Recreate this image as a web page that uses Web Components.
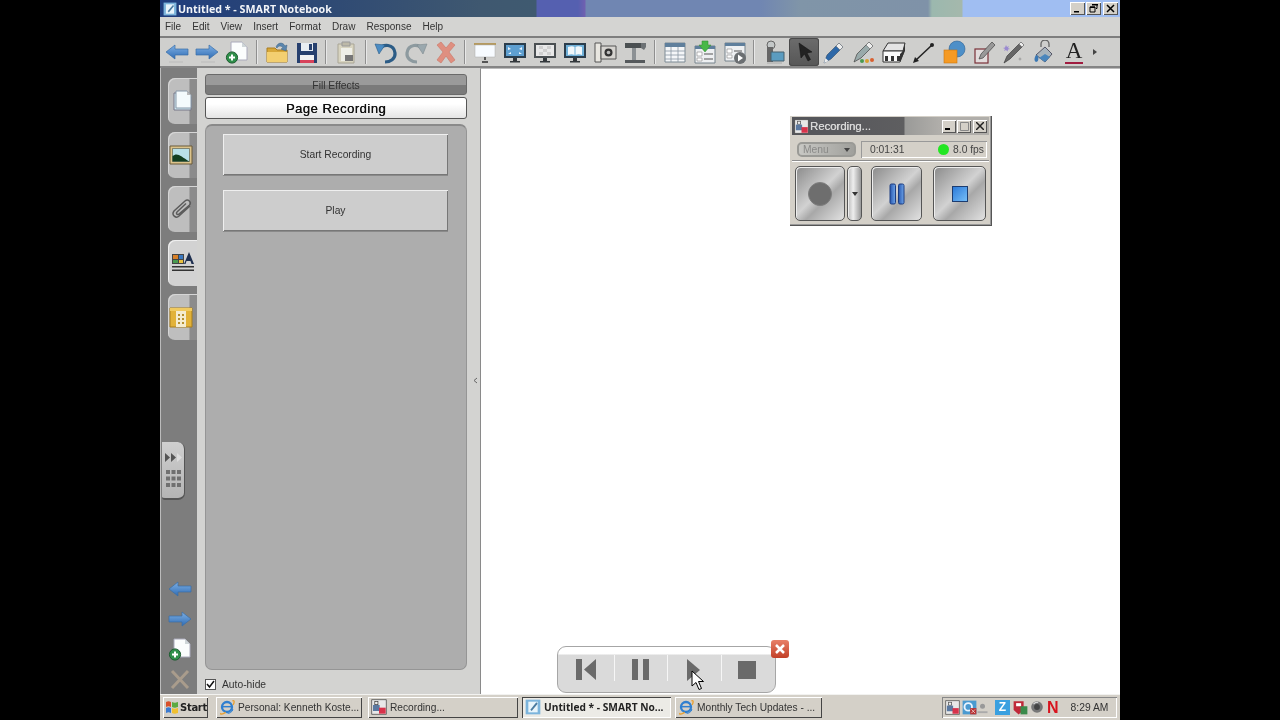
<!DOCTYPE html>
<html><head><meta charset="utf-8"><title>SMART Notebook</title>
<style>html,body{margin:0;height:100%;background:#000;overflow:hidden}body{font:11px "Liberation Sans",Arial,sans-serif;color:#222}</style>
</head><body>
<sn-app>
  <sn-titlebar slot="title">Untitled * - SMART Notebook</sn-titlebar>
  <sn-menubar slot="menu"><span>File</span><span>Edit</span><span>View</span><span>Insert</span><span>Format</span><span>Draw</span><span>Response</span><span>Help</span></sn-menubar>
  <sn-toolbar slot="tools"></sn-toolbar>
  <sn-sidetabs slot="side"></sn-sidetabs>
  <sn-panel slot="panel"></sn-panel>
  <sn-canvas slot="canvas"></sn-canvas>
  <sn-taskbar slot="task"></sn-taskbar>
  <sn-recorder slot="over"></sn-recorder>
  <sn-playbar slot="over"></sn-playbar>
</sn-app>
<script>
const grad=(id,a,b,x2=0,y2=1)=>`<linearGradient id="${id}" x1="0" y1="0" x2="${x2}" y2="${y2}"><stop offset="0" stop-color="${a}"/><stop offset="1" stop-color="${b}"/></linearGradient>`;
const plus=`<circle cx="7" cy="17.500" r="5.600" fill="#2f8f4a" stroke="#1d5c30"/><path d="M4 17.500h6M7 14.500v6" stroke="#fff" stroke-width="2"/>`;
const monitor=(inner,frame='#2b3d4c')=>`<rect x="1" y="3" width="22" height="15" fill="${frame}"/>${inner}<path d="M10 18h4v3h3v1.500H7V21h3z" fill="#33383c"/>`;
const ICON={
 back:`<defs>${grad('g','#7fb0e4','#2f6cb4')}</defs><path d="M1 12 10 5v4h13v6H10v4z" fill="url(#g)" stroke="#3a6ea8" stroke-width=".7"/><path d="M4 22h14" stroke="#bbb"/>`,
 fwd:`<defs>${grad('g','#7fb0e4','#2f6cb4')}</defs><path d="M23 12 14 5v4H1v6h13v4z" fill="url(#g)" stroke="#3a6ea8" stroke-width=".7"/><path d="M6 22h14" stroke="#bbb"/>`,
 new:`<path d="M6 2h11l5 5v13H6z" fill="#fbfdfd" stroke="#aab"/><path d="M17 2v5h5z" fill="#cfd6d8"/>${plus}`,
 open:`<path d="M2 8h8l2 2h10v12H2z" fill="#d8a838" stroke="#a87c20"/><path d="M2 12h20v10H2z" fill="#f3cf70"/><path d="M11 7c2-5 7-5 9-1l2-1-1 6-5-2 2-1c-1-2-4-3-6 0z" fill="#5a86ae" stroke="#3a5e80" stroke-width=".5"/>`,
 save:`<path d="M2 3h20v20H2z" fill="#27406e"/><path d="M6 3h12v8H6z" fill="#e7edf2"/><path d="M14 4h3v6h-3z" fill="#27406e"/><path d="M5 15h14v8H5z" fill="#f2f2f2"/><path d="M5 20h14v3H5z" fill="#d8425a"/>`,
 paste:`<path d="M4 4h16v19H4z" fill="#d8d4c0" stroke="#a9a595"/><path d="M8 2h8v4H8z" fill="#bdb9a8" stroke="#999"/><path d="M7 8h11v13H7z" fill="#efefe8"/><path d="M11 15h8v6h-8z" fill="#777"/>`,
 undo:`<path d="M5 10C9 3 20 4 21 13c.7 6-5 9-10 9" fill="none" stroke="#2c5c86" stroke-width="3.200"/><path d="M1 4l10 1-6 9z" fill="#4a8cc4" stroke="#2c5c86" stroke-width=".6"/>`,
 redo:`<path d="M19 10C15 3 4 4 3 13c-.7 6 5 9 10 9" fill="none" stroke="#8d9a9f" stroke-width="3.200"/><path d="M23 4l-10 1 6 9z" fill="#9aa8ae" stroke="#7e8a8f" stroke-width=".6"/>`,
 del:`<path d="M3 5l4-3 5 6 5-6 4 3-6 7 6 8-4 3-5-7-5 7-4-3 6-8z" fill="#df8f80" stroke="#c97565" stroke-width=".6"/>`,
 shade:`<path d="M1 3h22v2H1z" fill="#b59a60"/><path d="M2 5h20v12H2z" fill="#f7fbff" stroke="#aaa" stroke-width=".5"/><path d="M12 17v3" stroke="#555" stroke-width="2"/><path d="M9 21h6v2H9z" fill="#555"/>`,
 mon1:monitor(`<rect x="3" y="5" width="18" height="11" fill="#5e9fd0"/><path d="M5 7l3 2-3 1zM19 7l-3 2 3 1zM5 14l3-2v2zM19 14l-3-2v2z" fill="#eaf4fc"/>`),
 mon2:monitor(`<rect x="3" y="5" width="18" height="11" fill="#e8e8e8"/><path d="M6 6h4v3H6zM14 6h4v3h-4zM10 9h4v3h-4zM6 12h4v3H6zM14 12h4v3h-4z" fill="#cfcfcf"/>`,'#4a4f52'),
 mon3:monitor(`<rect x="3" y="5" width="18" height="11" fill="#6fb0d8"/><path d="M5 7c3-1 5-1 6.500 0v8c-2-1-4-1-6.500 0zM19 7c-3-1-5-1-6.500 0v8c2-1 4-1 6.500 0z" fill="#f0f6fa"/>`),
 cam:`<path d="M2 3h6v19H2z" fill="#e8e6e0" stroke="#555"/><path d="M8 6h15v13H8z" fill="#d6d4d0" stroke="#555"/><circle cx="15.500" cy="12.500" r="4" fill="#333"/><circle cx="15.500" cy="12.500" r="1.800" fill="#bbb"/>`,
 doc:`<path d="M2 3h17v5H2z" fill="#4b5052"/><path d="M18 3h5v4l-2 3-3-2z" fill="#6d7275"/><path d="M9 8h4v12H9z" fill="#8c9194"/><path d="M2 20h20v3H2z" fill="#55595c"/>`,
 table:`<path d="M2 3h20v19H2z" fill="#f4f6f8" stroke="#7c8a94"/><path d="M2 3h20v4H2z" fill="#5f7f9c"/><path d="M2 11h20M2 15h20M2 19h20M8 7v15M15 7v15" stroke="#8a98a2" stroke-width=".8"/>`,
 addin:`<path d="M2 6h20v17H2z" fill="#eef0f2" stroke="#77838c"/><path d="M2 6h20v3H2z" fill="#5f7f9c"/><path d="M4 12h5v4H4zM4 18h5v3H4z" fill="#fff" stroke="#888" stroke-width=".6"/><path d="M11 14h9M11 19h9" stroke="#555"/><path d="M9 1h6v4h3l-6 7-6-7h3z" fill="#48b848" stroke="#2f8a2f" stroke-width=".5"/>`,
 play:`<path d="M2 3h20v18H2z" fill="#eef0f2" stroke="#77838c"/><path d="M2 3h20v3H2z" fill="#5f7f9c"/><path d="M4 9h5v4H4zM4 15h5v3H4z" fill="#fff" stroke="#888" stroke-width=".6"/><path d="M11 11h8" stroke="#555"/><circle cx="17" cy="18" r="6" fill="#6b6f72"/><path d="M15 14.500l5 3.500-5 3.500z" fill="#fff"/>`,
 rec:`<circle cx="9" cy="5" r="4" fill="#c4c8c8" stroke="#666"/><path d="M5 7h6v15H5z" fill="#666"/><path d="M9 12h13v9H9z" fill="#5b9cc0" stroke="#47606e"/><path d="M5 23h15" stroke="#aaa"/>`,
 select:`<path d="M7 3l2 15 3.500-4 3.500 7 2.500-1.500-3.500-6.500 5-1z" fill="#222" stroke="#111" stroke-width=".5"/>`,
 pen:`<path d="M2 23l3-8L17 3l4 4L9 19z" fill="#2d68a8" stroke="#273c55" stroke-width=".5"/><path d="M14 6l4 4 3-3-4-4z" fill="#eee" stroke="#666" stroke-width=".5"/><path d="M2 23l1.500-5 3 3z" fill="#eee"/>`,
 creative:`<path d="M2 22l3-8L17 2l4 4L9 18z" fill="#9aa" stroke="#444" stroke-width=".7"/><path d="M14 5l4 4 3-3-4-4z" fill="#eee" stroke="#555" stroke-width=".5"/><circle cx="10" cy="21" r="2" fill="#4a9a50"/><circle cx="15" cy="21" r="2" fill="#d8a030"/><circle cx="20" cy="20" r="2" fill="#d86030"/>`,
 eraser:`<path d="M6 3h17l-2 8H1z" fill="#e4e4e4" stroke="#333"/><path d="M1 11h20v3l-3 8H1z" fill="#fafafa" stroke="#333"/><path d="M3 16h3v5H3zM9 16h3v5H9zM15 16h3v5h-3z" fill="#333"/><path d="M21 11l2-8v8l-5 11v-8z" fill="#333"/>`,
 line:`<path d="M3 21 20 5" stroke="#222" stroke-width="1.500"/><circle cx="20" cy="5" r="2" fill="#222"/><path d="M1 23l2-6 4 4z" fill="#222"/><path d="M4 23h14" stroke="#ccc"/>`,
 shapes:`<circle cx="15" cy="9" r="8" fill="#4d8fc8" stroke="#2e6294" stroke-width=".6"/><rect x="2" y="10" width="13" height="13" fill="#f59a24" stroke="#c97610" stroke-width=".6"/>`,
 magic:`<rect x="3" y="9" width="13" height="14" fill="#e2dcdc" stroke="#7a3038" stroke-width="1.200"/><path d="M7 19l2-5L20 2l3 3L11 18z" fill="#999" stroke="#444" stroke-width=".7"/>`,
 wand:`<path d="M2 23l3-7L19 2l3 3L8 19z" fill="#666" stroke="#333" stroke-width=".6"/><path d="M17 4l3 3 2-2-3-3z" fill="#eee" stroke="#555" stroke-width=".4"/><path d="M4 5l1 2 2-1-1 2 2 1-2 .5-.5 2L4 10l-2 1 1-2-2-1 2-.5z" fill="#9a8ad0"/><path d="M18 17l.6 1.400 1.400.6-1.400.6-.6 1.400-.6-1.400-1.400-.6 1.400-.6z" fill="#999"/>`,
 fill:`<path d="M9 7V4a4 4 0 0 1 8 0v3" fill="none" stroke="#666" stroke-width="1.300"/><path d="M4 15l9-8 7 7-7 8z" fill="#a8b4bc" stroke="#556"/><path d="M4 15c-2 3-2 6 0 7 2 0 3-3 2-6z" fill="#3a78b4"/><path d="M7 18l6 4 5-5-5-3z" fill="#4a86bc"/>`,
 font:`<path d="M3 22h18v2.500H3z" fill="#a01c40"/>`
};
const svg=(n,s=24)=>`<svg width="${s}" height="${s}" viewBox="0 0 24 24" aria-hidden="true">${ICON[n]||''}</svg>`;
const recIcon=`<path d="M1 1h22v22H1z" fill="#e8e8e8" stroke="#333"/><path d="M5 3h6v6H5z" fill="#555"/><path d="M3 9h10v9H3z" fill="#5a78a0"/><path d="M12 13h10v9H12z" fill="#d8324a"/><circle cx="8" cy="6" r="2" fill="#eee"/>`;
const ieIcon=`<circle cx="12" cy="12" r="7.500" fill="none" stroke="#2f7fd0" stroke-width="3.500"/><path d="M5 11.500h14" stroke="#2f7fd0" stroke-width="2.200"/><path d="M3 21C1 24 5 23 10 20M20 3c4-2 3 3 1 6" fill="none" stroke="#e8a030" stroke-width="2"/><path d="M17 16h4c-2 4-5 5.500-8 5.500" fill="none" stroke="#2f7fd0" stroke-width="1.500"/>`;
const nbIcon=`<path d="M1 1h22v22H1z" fill="#7cb4dc"/><path d="M5 4h14v16H5z" fill="#e8f4fb"/><path d="M8 16 17 5l2 2-9 11z" fill="#4a7aa0"/>`;
class Base extends HTMLElement{
 constructor(){super();this.attachShadow({mode:'open'});this.shadowRoot.innerHTML=this.tpl();}
 tpl(){return'';}
}
const def=(n,tpl)=>customElements.define(n,class extends Base{tpl(){return tpl.call(this)}});

def('sn-app',()=>`<style>
:host{display:block;width:960px;height:720px;margin:0 auto;position:relative;background:#d2d2d0;overflow:hidden;filter:blur(.35px)}
.body{display:flex;height:626px}
</style>
<slot name="title"></slot><slot name="menu"></slot><slot name="tools"></slot>
<div class="body"><slot name="side"></slot><slot name="panel"></slot><slot name="canvas"></slot></div>
<slot name="task"></slot><slot name="over"></slot>`);

def('sn-titlebar',()=>`<style>
:host{display:flex;align-items:center;height:17px;padding:0 2px 0 3px;
background:linear-gradient(90deg,#1f3c7c 0,#2f4a74 170px,#3f5870 320px,#3f5a70 376px,#5560b0 377px,#5560b0 418px,#7060b0 425px,#7086b2 426px,#7086b2 600px,#8095a8 640px,#7f92a8 768px,#9bb8ae 772px,#a5b8ac 802px,#a0bef2 803px,#a0bef2 960px);
color:#f2f4f8;font:bold 10.700px "Open Sans","Liberation Sans",sans-serif}
.ic{margin-right:1px;display:flex}.t{flex:1;white-space:nowrap}
.b{width:15px;height:13px;margin-left:1px;background:#d4d0c8;box-shadow:inset 1px 1px #fff,inset -1px -1px #555;display:flex;align-items:center;justify-content:center}
</style><span class="ic"><svg width="14" height="14" viewBox="0 0 24 24">${nbIcon}</svg></span><span class="t"><slot></slot></span>
<span class="b"><svg width="9" height="9" viewBox="0 0 9 9"><path d="M1 7h5v1.500H1z"/></svg></span>
<span class="b"><svg width="9" height="9" viewBox="0 0 9 9"><path d="M3 .5h5v4H7M1 3h5v5H1z" fill="none" stroke="#000"/><path d="M3 0h6v1.500H3zM1 2.500h5V4H1z"/></svg></span>
<span class="b" style="margin-left:2px"><svg width="9" height="9" viewBox="0 0 9 9"><path d="M1 1l7 7M8 1 1 8" stroke="#000" stroke-width="1.500"/></svg></span>`);

def('sn-menubar',()=>`<style>
:host{display:flex;align-items:center;gap:11.100px;height:19px;padding:0 0 0 5px;background:#d4d4d2;font-size:10px;color:#333}
::slotted(span){white-space:nowrap}
</style><slot></slot>`);

customElements.define('sn-tool',class extends HTMLElement{
 connectedCallback(){if(this.shadowRoot)return;const r=this.attachShadow({mode:'open'});
 const n=this.getAttribute('icon');const on=this.hasAttribute('active');
 r.innerHTML=`<style>:host{display:flex;align-items:center;justify-content:center;width:30px;height:28px;position:relative;${on?'background:linear-gradient(#6c6c6c,#565656);border-radius:3px;box-shadow:inset 0 0 0 1px #4a4a4a':''}}
 .A{position:absolute;left:0;right:0;top:0;text-align:center;font:23px/26px "Liberation Serif",serif;color:#222}</style>${n==='font'?'<span class="A">A</span>':''}${svg(n)}`;}
});
def('sn-sep',()=>`<style>:host{display:block;width:2px;height:24px;margin:0 3.750px;background:#8f8f8f;border-right:1px solid #e8e8e8;box-sizing:border-box}</style>`);

customElements.define('sn-toolbar',class extends Base{
 tpl(){const seq='back fwd new | open save | paste | undo redo del | shade mon1 mon2 mon3 cam doc | table addin play | rec select pen creative eraser line shapes magic wand fill font'.split(' ');
 return `<style>:host{display:flex;align-items:center;padding:0 0 0 2px;background:#cfcfcd;border-top:2px solid #7e7e7e;border-bottom:2px solid #858585;box-sizing:border-box;height:32px}
 .more{margin-left:4px;width:0;height:0;border-left:4px solid #444;border-top:3.500px solid transparent;border-bottom:3.500px solid transparent}</style>`+
 seq.map(s=>s==='|'?'<sn-sep></sn-sep>':`<sn-tool icon="${s}"${s==='select'?' active':''}></sn-tool>`).join('')+'<span class="more"></span>';}
});

customElements.define('sn-sidetab',class extends HTMLElement{
 connectedCallback(){if(this.shadowRoot)return;const r=this.attachShadow({mode:'open'});const on=this.hasAttribute('active');
 r.innerHTML=`<style>:host{display:flex;align-items:center;justify-content:center;width:29px;height:46px;box-sizing:border-box;border-radius:7px 0 0 7px;padding-right:${on?0:3}px;
 background:${on?'#d2d2d2':'linear-gradient(90deg,#bebebe 72%,#8b8b8b 76%)'};margin-bottom:8px;box-shadow:inset 1px 1px ${on?'#eee':'#d6d6d6'}}</style><slot></slot>`;}
});
const TABI={
 pages:`<path d="M5 4h13l4 4v13H5z" fill="#cfe6ee" stroke="#778"/><path d="M7 2h11l4 4v13H7z" fill="#f4fbfd" stroke="#89a"/><path d="M18 2v4h4z" fill="#bbb"/>`,
 gallery:`<path d="M1 3h22v18H1z" fill="#dcc48c" stroke="#6a5a38"/><path d="M3.500 5.500h17v13h-17z" fill="#b8e0e8" stroke="#3a3a2a" stroke-width=".5"/><path d="M3.500 13c5-4 8 0 17 5.500h-17z" fill="#123e20"/>`,
 clip:`<path d="M21 9 10 19c-3 3-8-1-5-5L16 4c3-2.500 7 1 4.500 4L10 17c-1.500 1.500-3.500-.5-2-2l9-8.500" fill="none" stroke="#5c5c5c" stroke-width="1.500"/>`,
 props:`<path d="M1 3h12v10H1z" fill="#444"/><path d="M2 4h5v4H2z" fill="#d88028"/><path d="M8 4h4v4H8z" fill="#3a78c0"/><path d="M2 9h5v3H2z" fill="#4a9a50"/><path d="M8 9h4v3H8z" fill="#e8c040"/><path d="M13 13 18 1l5 12h-2.500l-1-3h-4l-1 3z" fill="#1f3050"/><path d="M1 15h22v1.500H1zM1 18.500h22V20H1z" fill="#333"/>`,
 addons:`<path d="M1 3h22v19H1z" fill="#e2b238" stroke="#a67c1c"/><path d="M1 3h22v3H1z" fill="#f0ca60"/><path d="M7 6h10v16H7z" fill="#f4ecd0"/><path d="M9 9h2v2H9zM13 9h2v2h-2zM9 13h2v2H9zM13 13h2v2h-2zM9 17h2v2H9zM13 17h2v2h-2z" fill="#b59030"/>`
};
const tabi=(n,s)=>`<svg width="${s||24}" height="${s||24}" viewBox="0 0 24 24">${TABI[n]}</svg>`;
const noShadow=s=>s.replace(/<path d="M\d+ 22h14"[^>]*>/,'');
def('sn-sidetabs',()=>`<style>
:host{display:flex;flex-direction:column;width:37px;box-sizing:border-box;background:#7d7d7d;border-left:1px solid #bbb;padding:10px 0 0 7px;position:relative;flex:none}
.nav{margin-top:auto;display:flex;flex-direction:column;align-items:center;width:24px;padding-bottom:3px;gap:6px}
.pal{position:absolute;left:1px;top:374px;width:23px;height:58px;box-sizing:border-box;background:linear-gradient(#cfcfcf,#b4b4b4);border-radius:0 7px 7px 3px;border-right:1px solid #555;border-bottom:2px solid #555;display:flex;flex-direction:column;align-items:center;padding-top:10px;gap:7px}
</style>
<sn-sidetab>${tabi('pages')}</sn-sidetab><sn-sidetab>${tabi('gallery')}</sn-sidetab><sn-sidetab>${tabi('clip')}</sn-sidetab><sn-sidetab active>${tabi('props')}</sn-sidetab><sn-sidetab>${tabi('addons')}</sn-sidetab>
<div class="nav">${noShadow(svg('back'))}${noShadow(svg('fwd'))}${svg('new')}<svg width="24" height="24" viewBox="0 0 24 24"><path d="M4 4l16 17M20 4 4 21" stroke="#a99c8c" stroke-width="3"/></svg></div>
<div class="pal"><svg width="18" height="11" viewBox="0 0 18 11"><path d="M1 1l5 4.500-5 4.500zM7 1l5 4.500-5 4.500z" fill="#555"/><path d="M13 1l5 4.500-5 4.500z" fill="#ddd"/></svg>
<svg width="15" height="18" viewBox="0 0 15 18" fill="#707070"><path d="M0 0h4v4H0zM5.500 0h4v4h-4zM11 0h4v4h-4zM0 6.500h4v4H0zM5.500 6.500h4v4h-4zM11 6.500h4v4h-4zM0 13h4v4H0zM5.500 13h4v4h-4zM11 13h4v4h-4z"/></svg></div>`);

def('sn-bigbtn',()=>`<style>:host{display:flex;align-items:center;justify-content:center;height:41px;width:225px;box-sizing:border-box;background:#cdcdcd;box-shadow:inset 1px 1px #efefef,inset -1px -1px #777,0 1px #8a8a8a;font-size:10.300px;color:#333}</style><slot></slot>`);

def('sn-panel',()=>`<style>
:host{display:flex;flex-direction:column;width:283px;box-sizing:border-box;padding:6px 13px 0 8px;background:#d3d3d1;position:relative;flex:none}
.fill{height:21px;border:1px solid #6a6a6a;border-radius:3px;box-sizing:border-box;background:linear-gradient(#9a9a9a 55%,#7a7a7a 55%);display:flex;align-items:center;justify-content:center;font-size:10.300px;color:#333;padding-top:1px}
.pg{height:22px;margin-top:2px;border:1px solid #555;border-radius:3px;box-sizing:border-box;background:linear-gradient(#fff 30%,#e4e4e4);display:flex;align-items:center;justify-content:center;font:13px "Liberation Sans",sans-serif;letter-spacing:.5px;color:#111;text-shadow:.3px 0 #111}
.box{height:546px;margin-top:5px;background:#adadad;border:1px solid #959595;border-top:2px solid #8a8a8a;border-radius:7px;box-sizing:border-box;padding:8px 0 0 17px;display:flex;flex-direction:column;gap:15px}
.auto{display:flex;align-items:center;gap:6px;margin-top:9px;font-size:10.300px;color:#333}
.cb{width:9px;height:9px;background:#fff;border:1px solid #555;display:flex}
.grip{position:absolute;right:2px;top:309px;width:5px;height:7px}
</style>
<div class="fill">Fill Effects</div><div class="pg">Page Recording</div>
<div class="box"><sn-bigbtn>Start Recording</sn-bigbtn><sn-bigbtn>Play</sn-bigbtn></div>
<div class="auto"><span class="cb"><svg width="9" height="9" viewBox="0 0 9 9"><path d="M1 4l2.500 3L8 1" fill="none" stroke="#111" stroke-width="1.500"/></svg></span>Auto-hide</div>
<svg class="grip" viewBox="0 0 5 7"><path d="M4 1 1 3.500 4 6" fill="none" stroke="#666"/></svg>`);

def('sn-canvas',()=>`<style>:host{display:block;flex:1;background:#fff;border-left:1px solid #8a8a8a;border-top:1px solid #bbb}</style>`);

customElements.define('sn-task',class extends HTMLElement{
 connectedCallback(){if(this.shadowRoot)return;const r=this.attachShadow({mode:'open'});const on=this.hasAttribute('active');
 const ic={ie:ieIcon,rec:recIcon,nb:nbIcon}[this.getAttribute('icon')];
 r.innerHTML=`<style>:host{display:flex;align-items:center;gap:3px;height:21px;box-sizing:border-box;padding:0 0 0 3px;width:${this.getAttribute('w')}px;margin-right:${this.getAttribute('m')||0}px;white-space:nowrap;overflow:hidden;font-size:10.200px;color:#333;${on?'background:#ecebe6;font:bold 10.200px "Open Sans","Liberation Sans",sans-serif;color:#222;box-shadow:inset 1px 1px #444,inset -1px -1px #fff':'background:#d4d0c8;box-shadow:inset 1px 1px #fff,inset -1px -1px #444'}}</style>
 <svg width="16" height="16" viewBox="0 0 24 24" style="flex:none">${ic}</svg><span><slot></slot></span>`;}
});
def('sn-taskbar',()=>`<style>
:host{display:flex;align-items:center;position:absolute;left:0;right:0;bottom:0;height:26px;box-sizing:border-box;padding:0 3px;background:#d4d0c8;box-shadow:inset 0 1px #f2f2f0}
.start{display:flex;align-items:center;gap:1px;height:21px;width:45px;box-sizing:border-box;padding-left:2px;margin-right:8px;box-shadow:inset 1px 1px #fff,inset -1px -1px #444;font:bold 10px "DejaVu Sans",sans-serif;letter-spacing:-.3px;color:#222;flex:none}
.tray{margin-left:auto;display:flex;align-items:center;height:21px;width:175px;box-sizing:border-box;padding-left:3px;box-shadow:inset 1px 1px #888,inset -1px -1px #fff}
.tray svg{flex:none}.z{width:15px;height:15px;background:#3aa0e0;color:#fff;font:bold 12px/15px "Liberation Sans",sans-serif;text-align:center;margin:0 3px 0 5px}
.n{font:bold 16px/17px "Liberation Sans",sans-serif;color:#d8141e;margin:0 12px 0 3px}
.clk{font-size:10.300px;color:#333}
</style>
<div class="start"><svg width="14" height="14" viewBox="0 0 14 14"><path d="M1 2c2-1 3-1 5 0v5C4 6 3 6 1 7z" fill="#d8502a"/><path d="M7 2c2 1 3 1 6 0v5c-3 1-4 1-6 0z" fill="#5caa40"/><path d="M1 8c2-1 3-1 5 0v5c-2-1-3-1-5 0z" fill="#3a7ad0"/><path d="M7 8c2 1 3 1 6 0v5c-3 1-4 1-6 0z" fill="#f0c030"/></svg>Start</div>
<sn-task icon="ie" w="146" m="6">Personal: Kenneth Koste...</sn-task>
<sn-task icon="rec" w="150" m="4">Recording...</sn-task>
<sn-task icon="nb" w="149" m="4" active>Untitled * - SMART No...</sn-task>
<sn-task icon="ie" w="147">Monthly Tech Updates - ...</sn-task>
<div class="tray">
<svg width="15" height="15" viewBox="0 0 24 24">${recIcon}</svg>
<svg width="15" height="15" viewBox="0 0 24 24" style="margin-left:2px"><rect x="1" y="1" width="22" height="22" fill="#4a9ad0"/><circle cx="10" cy="11" r="6" fill="none" stroke="#e8f4ff" stroke-width="3"/><rect x="13" y="13" width="10" height="10" fill="#b83030"/><path d="M15 15l6 6M21 15l-6 6" stroke="#fff"/></svg>
<svg width="15" height="15" viewBox="0 0 24 24" style="margin-left:-2px"><circle cx="12" cy="10" r="4" fill="#999"/><path d="M4 18h16v3H4z" fill="#aaa"/></svg>
<span class="z">Z</span>
<svg width="15" height="15" viewBox="0 0 24 24"><path d="M1 2h16v14l-8 7-8-7z" fill="#c02838"/><path d="M5 5h8v5H5z" fill="#fff"/><path d="M12 10h11v13H12z" fill="#3a8a4a"/></svg>
<svg width="14" height="14" viewBox="0 0 24 24" style="margin-left:2px"><circle cx="12" cy="12" r="10" fill="#777"/><circle cx="12" cy="12" r="5" fill="#444"/><path d="M6 7a8 8 0 0 1 8-3" stroke="#ddd" stroke-width="2" fill="none"/></svg>
<span class="n">N</span><span class="clk">8:29 AM</span></div>`);

const rbtn=(inner,w)=>`<div class="rb" style="width:${w}px">${inner}</div>`;
def('sn-recorder',()=>`<style>
:host{position:absolute;left:629px;top:115px;width:203px;height:111px;box-sizing:border-box;background:#d4d0c8;box-shadow:inset 1px 1px #fff,inset -1px -1px #555,inset -2px -2px #999;padding:2px 3px;display:flex;flex-direction:column;font-size:10.300px;color:#333}
.tb{display:flex;align-items:center;height:18px;flex:none;background:linear-gradient(90deg,#54555a 0,#5e5e60 112px,#9a9a98 113px,#b0aeaa 148px);color:#d8d8d8;font:11.300px "Liberation Sans",sans-serif;padding-left:2px}
.tb>span{flex:1;margin-left:1px;text-shadow:.3px 0 #d8d8d8}
.w{width:14px;height:13px;margin-right:1px;background:#d4d0c8;box-shadow:inset 1px 1px #fff,inset -1px -1px #555;display:flex;align-items:center;justify-content:center}
.row{display:flex;align-items:center;gap:5px;height:21px;padding:4px 0 0 5px;border-bottom:1px solid #8d8d8d;box-shadow:0 1px #fff;flex:none}
.menu{width:59px;height:15px;box-sizing:border-box;border:2px solid #9a9a96;border-radius:5px;background:linear-gradient(90deg,#c8c8c4,#a0a09c);display:flex;align-items:center;justify-content:space-between;padding:0 4px;color:#8a8a88;font-size:10.300px}
.menu i{border-top:4px solid #444;border-left:3.500px solid transparent;border-right:3.500px solid transparent}
.time{width:126px;height:17px;box-sizing:border-box;box-shadow:inset 1px 1px #999,inset -1px -1px #fff;display:flex;align-items:center;padding:0 3px 0 9px;color:#444}
.time b{margin-left:auto;width:11px;height:11px;border-radius:50%;background:#22e622;margin-right:4px}
.btns{display:flex;align-items:flex-start;padding:5px 0 0 3px}
.rb{height:55px;box-sizing:border-box;border:1px solid #555;border-radius:5px;box-shadow:inset 1px 1px #eee;background:linear-gradient(135deg,#8a8a8a 0,#d2d2d2 48%,#a8a8a8 62%,#e2e2e2 100%);display:flex;align-items:center;justify-content:center;flex:none}
</style>
<div class="tb"><svg width="15" height="15" viewBox="0 0 24 24">${recIcon}</svg><span>Recording...</span>
<div class="w"><svg width="8" height="8" viewBox="0 0 8 8"><path d="M0 6h5v2H0z"/></svg></div><div class="w"><svg width="9" height="9" viewBox="0 0 9 9"><path d="M.5.500h8v8h-8z" fill="none" stroke="#888"/></svg></div><div class="w" style="margin-left:1px;margin-right:2px"><svg width="8" height="8" viewBox="0 0 8 8"><path d="M0 0l8 8M8 0 0 8" stroke="#222" stroke-width="1.500"/></svg></div></div>
<div class="row"><div class="menu">Menu<i></i></div><div class="time">0:01:31<b></b>8.0 fps</div></div>
<div class="btns">
${rbtn(`<svg width="26" height="26"><circle cx="13" cy="13" r="11.500" fill="#6e6e6e" stroke="#7e7e7e"/></svg>`,50)}
<div style="width:2px"></div>
<div class="rb" style="width:15px;background:linear-gradient(90deg,#bbb,#eee 40%,#999)"><span style="border-top:4px solid #333;border-left:3px solid transparent;border-right:3px solid transparent"></span></div>
<div style="width:9px"></div>
${rbtn(`<svg width="16" height="22" viewBox="0 0 16 22"><defs>${grad('p','#2858b0','#6ea4e8',1,0)}</defs><rect x="1" y="1" width="5.500" height="20" rx="1.500" fill="url(#p)" stroke="#1c3c80"/><rect x="9.500" y="1" width="5.500" height="20" rx="1.500" fill="url(#p)" stroke="#1c3c80"/></svg>`,51)}
<div style="width:11px"></div>
${rbtn(`<svg width="16" height="16"><defs>${grad('s','#2a78d8','#78c0f8',1,1)}</defs><rect x=".5" y=".5" width="15" height="15" fill="url(#s)" stroke="#1c3c70"/></svg>`,53)}
</div>`);

def('sn-playbar',()=>`<style>
:host{position:absolute;left:397px;top:646px;width:219px;height:47px;box-sizing:border-box;border:1px solid #a6a6a6;border-radius:9px;background:linear-gradient(#fff 7px,#dadada 8px);display:flex;padding-left:2px}
.c{width:53.500px;height:100%;display:flex;align-items:center;justify-content:center;position:relative;box-sizing:border-box}
.c+.c::before{content:"";position:absolute;left:0;top:8px;height:26px;width:1px;background:#f6f6f6}
.x{position:absolute;right:-14px;top:-7px;width:18px;height:18px;box-sizing:border-box;border-radius:3px;background:linear-gradient(#e88068,#c24028);display:flex;align-items:center;justify-content:center}
.cur{position:absolute;left:133px;top:23px}
</style>
<div class="c"><svg width="21" height="21"><path d="M0 0h6v21H0zM20 0v21L8 10.500z" fill="#6a6a6a"/></svg></div>
<div class="c"><svg width="17" height="21"><path d="M0 0h6v21H0zM11 0h6v21h-6z" fill="#6a6a6a"/></svg></div>
<div class="c"><svg width="15" height="22"><path d="M1 0l13 11L1 22z" fill="#6a6a6a"/></svg></div>
<div class="c"><svg width="18" height="18"><rect width="18" height="18" fill="#6a6a6a"/></svg></div>
<div class="x"><svg width="12" height="12"><path d="M2 2l8 8M10 2l-8 8" stroke="#fff" stroke-width="2.500"/></svg></div>
<svg class="cur" width="13" height="21" viewBox="0 0 13 21"><path d="M1 1v15l4-3.500 3 7 2.500-1-3-7h5z" fill="#fff" stroke="#000"/></svg>`);
</script>
</body></html>
